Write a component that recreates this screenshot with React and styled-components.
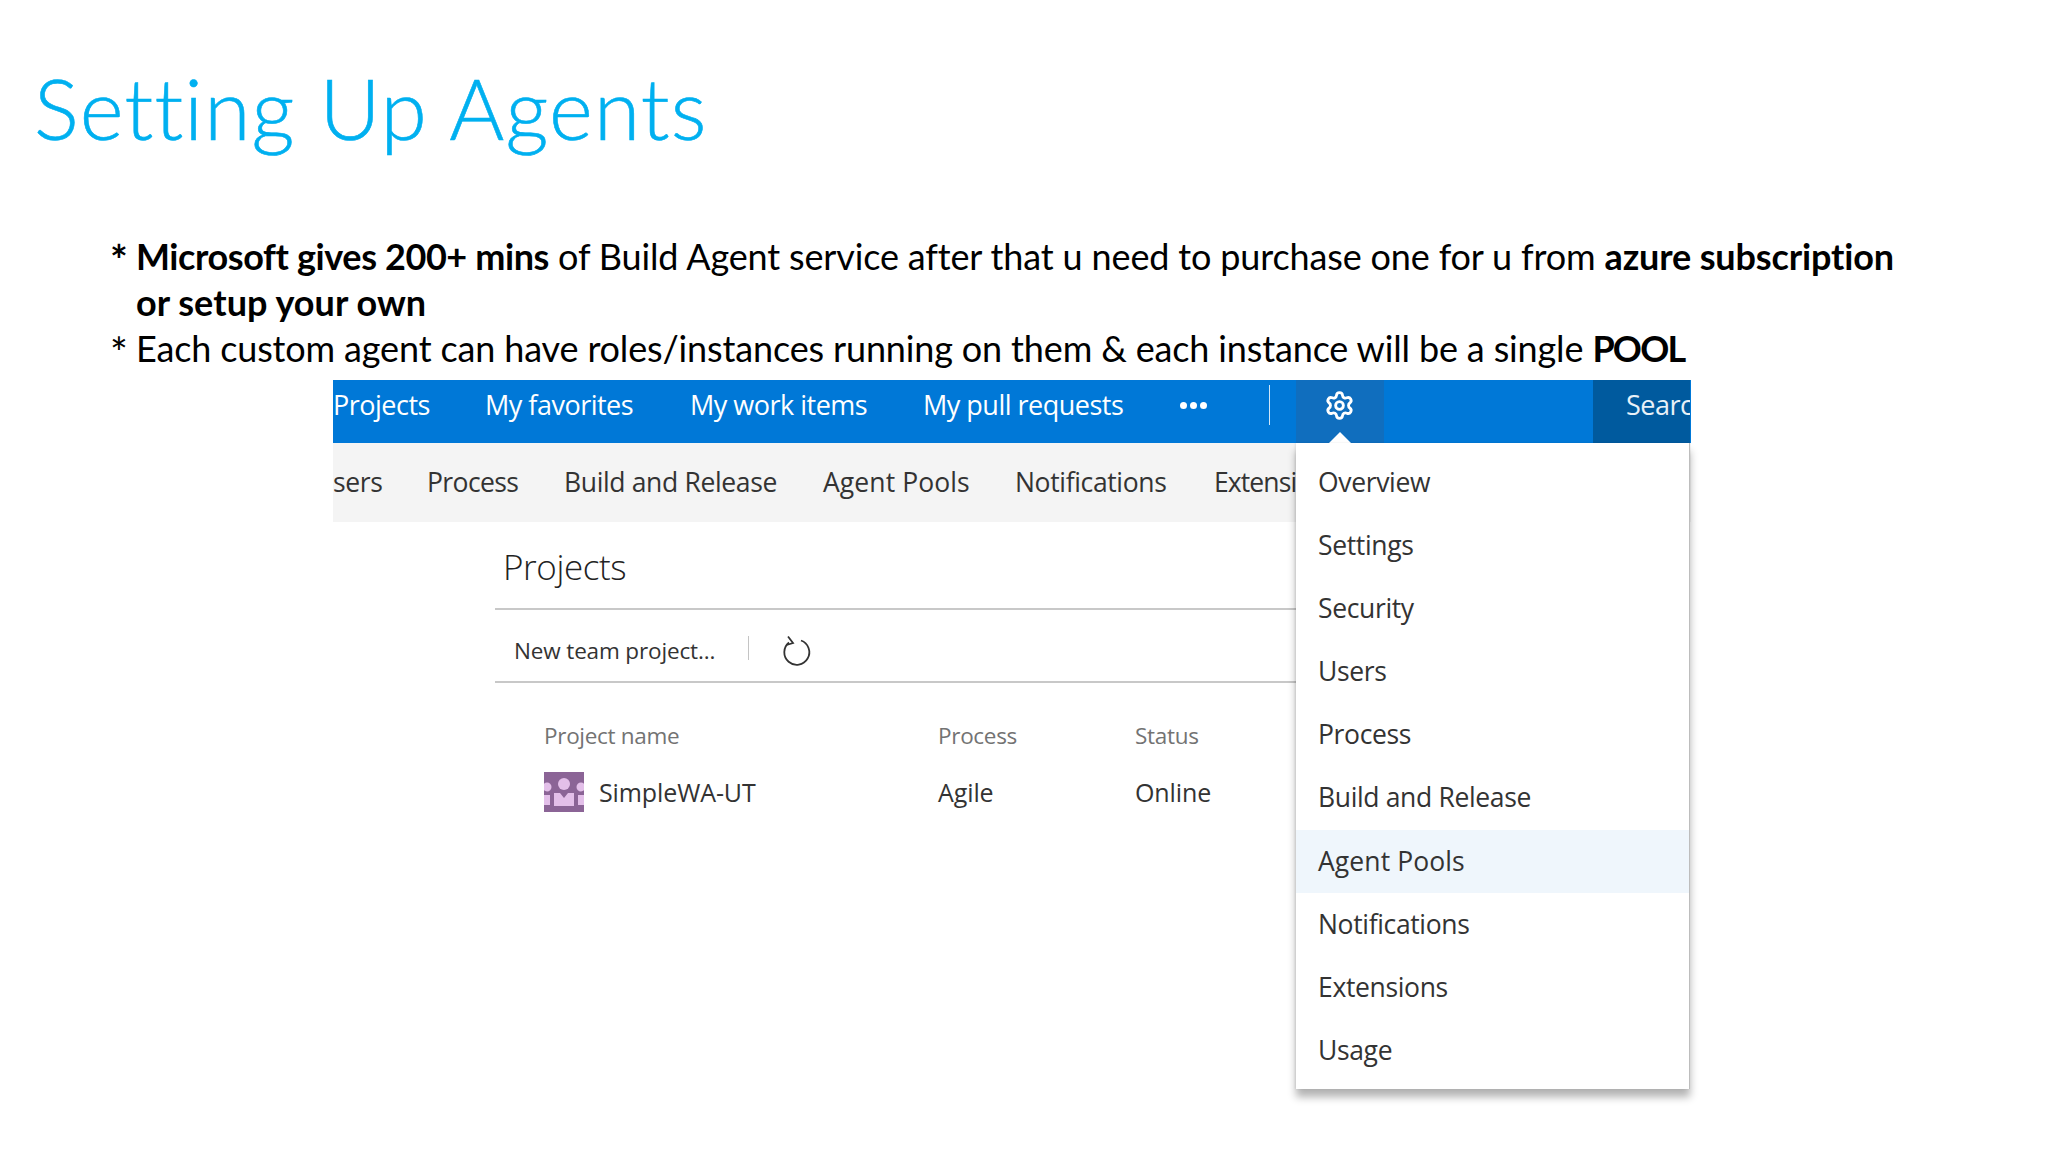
import React from "react";
import styled, { createGlobalStyle } from "styled-components";
import { Settings } from "lucide-react";

const Global = createGlobalStyle`
  html, body { margin: 0; padding: 0; background: #fff; }
  #root { width: 2048px; height: 1152px; overflow: hidden; }
`;

const Slide = styled.div`
  width: 2048px; height: 1152px; background: #fff; color: #000;
  display: flex; flex-direction: column; font-family: "Lato", "Liberation Sans", sans-serif;
`;
const Title = styled.h1`
  margin: 0; padding: 58px 0 0 34px; height: 160px; box-sizing: border-box;
  font-weight: 300; font-size: 84px; line-height: 100px; color: #00b0f0; letter-spacing: 1.15px; white-space: nowrap;
  -webkit-text-stroke: 0.6px #00b0f0;
`;
const Bullets = styled.div`
  padding: 73px 0 0 110px; height: 220px; box-sizing: border-box;
  font-size: 36px; line-height: 46px; white-space: nowrap; letter-spacing: -0.15px;
`;
const Bullet = styled.div`
  display: flex; gap: 9px;
`;
const Star = styled.span`width: 17px; height: 46px; padding-top: 4px; box-sizing: border-box; flex: none; font-size: 42px;`;
const Strong = styled.b`font-weight: 700; letter-spacing: ${p => p.$ls ?? -0.15}px;`;

const Shot = styled.div`
  position: relative; margin-left: 333px; width: 1358px; height: 720px;
  font-family: "Open Sans", "Liberation Sans", sans-serif;
`;
const Nav = styled.div`
  height: 63px; background: #0078d7; color: #fff; font-size: 27px; letter-spacing: -0.5px;
  display: grid; grid-template-columns: 152px 205px 233px 257px 89px 27px 88px 209px 97px; align-items: start; overflow: hidden;
`;
const NavItem = styled.div`white-space: nowrap; line-height: 50px;`;
const Dots = styled.div`display: flex; gap: 3px; height: 50px; align-items: center;`;
const Dot = styled.i`width: 7px; height: 7px; border-radius: 50%; background: #fff;`;
const Rule = styled.div`width: 1px; height: 40px; background: #cfe6f8; margin-top: 5px;`;
const GearCell = styled.div`
  position: relative; height: 63px; background: #106ebe; display: flex; justify-content: center; padding: 10px 2px 0 0; box-sizing: border-box;
  &::after {
    content: ""; position: absolute; left: 33px; bottom: 0;
    border-left: 11px solid transparent; border-right: 11px solid transparent; border-bottom: 11px solid #fff;
  }
`;
const Spacer = styled.div``;
const Search = styled.div`
  height: 63px; background: #005a9e; color: #e8f1f8; overflow: hidden; white-space: nowrap;
  line-height: 50px; padding-left: 33px; box-sizing: border-box;
`;
const SubNav = styled.div`
  height: 79px; background: #f4f4f4; color: #333; font-size: 26.5px;
  display: grid; grid-template-columns: 94px 137px 259px 192px 199px 200px; align-items: center; padding-bottom: 2px; box-sizing: border-box; overflow: hidden;
`;
const SubItem = styled.div`white-space: nowrap; letter-spacing: ${p => p.$ls ?? -0.35}px;`;
const Content = styled.div`
  padding-left: 162px; width: 801px; box-sizing: content-box;
`;
const Heading = styled.div`
  height: 88px; border-bottom: 2px solid #c8c8c8; box-sizing: border-box; width: 801px;
  padding: 23px 0 0 8px; font-size: 35px; line-height: 44px; font-weight: 300; color: #222; letter-spacing: -0.4px;
`;
const Toolbar = styled.div`
  height: 73px; border-bottom: 2px solid #c8c8c8; box-sizing: border-box; width: 801px;
  display: flex; align-items: center; padding: 10px 0 0 19px; font-size: 22.5px; color: #333; letter-spacing: -0.15px;
`;
const ToolText = styled.span`width: 234px; white-space: nowrap;`;
const ToolRule = styled.span`width: 1px; height: 24px; background: #c4c4c4; margin-top: -6px;`;
const Refresh = styled.svg`width: 32px; height: 32px; margin-left: 31px;`;
const Table = styled.div`
  padding: 34px 0 0 49px; display: grid; grid-template-columns: 394px 197px 160px;
  font-size: 22.5px;
`;
const Th = styled.div`height: 38px; line-height: 38px; color: #737373; letter-spacing: -0.3px; white-space: nowrap;`;
const Td = styled.div`
  height: 58px; margin-top: 8px; display: flex; align-items: center; gap: 15px; color: #333; font-size: 25px; letter-spacing: -0.1px; white-space: nowrap;
`;
const Menu = styled.div`
  position: absolute; left: 963px; top: 63px; width: 394px; height: 646px; background: #fff;
  padding-top: 8px; box-sizing: border-box; border-right: 1px solid #bdbdbd;
  box-shadow: 0 8px 8px rgba(0,0,0,.3), -1px 0 2px rgba(0,0,0,.08);
  font-size: 26.5px; color: #333; letter-spacing: -0.35px;
`;
const MenuItem = styled.div`
  height: 63.1px; line-height: 63px; padding-left: 22px;
  background: ${p => (p.$active ? "#eff6fc" : "transparent")};
  letter-spacing: ${p => (p.$active ? "0.1px" : "inherit")};
`;

const TeamIcon = () => (
  <svg width="40" height="40" viewBox="0 0 40 40">
    <rect width="40" height="40" fill="#8b6496" />
    <g fill="#e3bfe9">
      <circle cx="20" cy="12" r="6" />
      <path d="M10 21h6l4 5 4-5h6v13H10z" />
      <circle cx="3" cy="15" r="4.5" />
      <circle cx="37" cy="15" r="4.5" />
      <path d="M0 23h6v10H0zM34 23h6v10h-6z" />
    </g>
  </svg>
);

const menu = ["Overview","Settings","Security","Users","Process","Build and Release","Agent Pools","Notifications","Extensions","Usage"];

export default function App() {
  return (
    <Slide>
      <Global />
      <Title>Setting Up Agents</Title>
      <Bullets>
        <Bullet>
          <Star><Strong>*</Strong></Star>
          <div>
            <Strong $ls={-0.4}>Microsoft gives 200+ mins</Strong> of Build Agent service after that u need to purchase one for u from <Strong>azure subscription</Strong>
            <br />
            <Strong $ls={0.05}>or setup your own</Strong>
          </div>
        </Bullet>
        <Bullet>
          <Star>*</Star>
          <div>Each custom agent can have roles/instances running on them &amp; each instance will be a single <Strong $ls={-1.8}>POOL</Strong></div>
        </Bullet>
      </Bullets>
      <Shot>
        <Nav>
          <NavItem>Projects</NavItem>
          <NavItem>My favorites</NavItem>
          <NavItem>My work items</NavItem>
          <NavItem>My pull requests</NavItem>
          <Dots><Dot /><Dot /><Dot /></Dots>
          <Rule />
          <GearCell><Settings size={31} color="#fff" strokeWidth={2.2} /></GearCell>
          <Spacer />
          <Search>Search</Search>
        </Nav>
        <SubNav>
          <SubItem>sers</SubItem>
          <SubItem $ls={-0.6}>Process</SubItem>
          <SubItem>Build and Release</SubItem>
          <SubItem $ls={0.1}>Agent Pools</SubItem>
          <SubItem>Notifications</SubItem>
          <SubItem $ls={-0.9}>Extensions</SubItem>
        </SubNav>
        <Content>
          <Heading>Projects</Heading>
          <Toolbar>
            <ToolText>New team project...</ToolText>
            <ToolRule />
            <Refresh viewBox="0 0 32 32" fill="none" stroke="#333" strokeWidth="1.8">
              <path d="M9 7.5A12.5 12.5 0 1 0 21 5.5" />
              <path d="M8 1.5l5 6.5-6.5 2" />
            </Refresh>
          </Toolbar>
          <Table>
            <Th>Project name</Th>
            <Th>Process</Th>
            <Th>Status</Th>
            <Td><TeamIcon />SimpleWA-UT</Td>
            <Td>Agile</Td>
            <Td>Online</Td>
          </Table>
        </Content>
        <Menu>
          {menu.map(m => <MenuItem key={m} $active={m === "Agent Pools"}>{m}</MenuItem>)}
        </Menu>
      </Shot>
    </Slide>
  );
}
